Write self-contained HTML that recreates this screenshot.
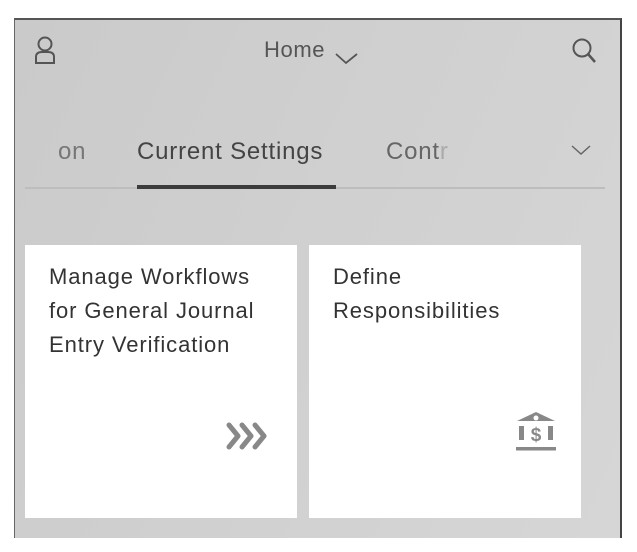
<!DOCTYPE html>
<html><head><style>
body{margin:0;width:637px;height:552px;background:#fff;position:relative;overflow:hidden;font-family:"Liberation Sans",sans-serif;}
.frame{position:absolute;left:14px;top:18px;width:605px;height:518px;border-left:1px solid #666;border-right:2px solid #444;border-top:2px solid #555;background:linear-gradient(115deg,#cacaca 0%,#cfcfcf 40%,#d6d6d6 100%);}
.t{position:absolute;color:#555;font-size:24px;letter-spacing:0.8px;line-height:28px;}
.card{position:absolute;top:245px;width:272px;height:273px;background:#fff;}
.card .txt{position:absolute;left:24px;top:15px;font-size:22px;letter-spacing:0.9px;line-height:34px;color:#333;}
</style></head><body>
<div class="frame"></div>
<svg style="position:absolute;left:33px;top:35px" width="26" height="32" viewBox="0 0 26 32"><circle cx="12" cy="9" r="6.5" fill="none" stroke="#555" stroke-width="2"/><path d="M3 28 V22 Q3 17 9 17 H15 Q21 17 21 22 V28 Z" fill="none" stroke="#555" stroke-width="2"/></svg>
<div class="t" style="left:264px;top:36px;font-size:22px;letter-spacing:0.6px">Home</div>
<svg style="position:absolute;left:334px;top:50px" width="26" height="16"><path d="M2 4 L12 13 L23 4" fill="none" stroke="#555" stroke-width="1.8"/></svg>
<svg style="position:absolute;left:570px;top:36px" width="28" height="30"><circle cx="12" cy="12" r="8.5" fill="none" stroke="#555" stroke-width="2"/><path d="M18 18 L25 26" stroke="#555" stroke-width="2.5"/></svg>
<div class="t" style="left:58px;top:138px;color:#777">on</div>
<div class="t" style="left:137px;top:138px;color:#444">Current Settings</div>
<div class="t" style="left:386px;top:138px;color:#666">Cont<span style="color:#aaa">r</span></div>
<svg style="position:absolute;left:570px;top:143px" width="22" height="14"><path d="M2 3 L11 11 L20 3" fill="none" stroke="#666" stroke-width="1.5"/></svg>
<div style="position:absolute;left:25px;top:187px;width:580px;height:2px;background:#bdbdbd"></div>
<div style="position:absolute;left:137px;top:185px;width:199px;height:4px;background:#3c3c3c"></div>
<div class="card" style="left:25px"><div class="txt">Manage Workflows<br>for General Journal<br>Entry Verification</div>
<svg style="position:absolute;left:200px;top:174px" width="48" height="36"><path d="M4 6 L13 17 L4 28 M17 6 L26 17 L17 28 M30 6 L39 17 L30 28" fill="none" stroke="#888" stroke-width="5" stroke-linecap="round" stroke-linejoin="round"/></svg></div>
<div class="card" style="left:309px"><div class="txt">Define<br>Responsibilities</div>
<svg style="position:absolute;left:206px;top:164px" width="44" height="46"><path d="M2 12 L21 3 L40 12 Z" fill="#888"/><circle cx="21" cy="9" r="2.5" fill="#fff"/><rect x="4" y="17" width="5" height="14" fill="#888"/><rect x="33" y="17" width="5" height="14" fill="#888"/><text x="21" y="32" font-size="19" font-weight="bold" fill="#888" text-anchor="middle" font-family="Liberation Sans">$</text><rect x="1" y="38" width="40" height="3.5" fill="#888"/></svg></div>
</body></html>
